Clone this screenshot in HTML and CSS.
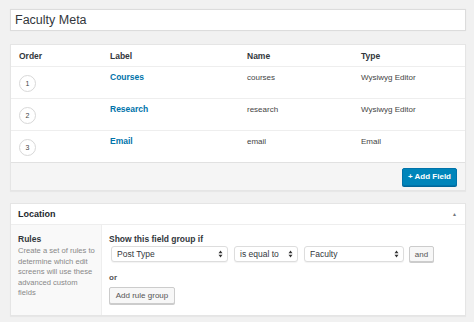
FILE: index.html
```html
<!DOCTYPE html>
<html>
<head>
<meta charset="utf-8">
<link rel="stylesheet" href="styles.css">
</head>
<body>
<div class="title">Faculty Meta</div>

<div class="panel fields">
  <div class="row head">
    <div>Order</div><div>Label</div><div>Name</div><div>Type</div>
  </div>
  <div class="row">
    <div><span class="num">1</span></div><div class="lbl">Courses</div><div class="sm">courses</div><div class="sm">Wysiwyg Editor</div>
  </div>
  <div class="row">
    <div><span class="num">2</span></div><div class="lbl">Research</div><div class="sm">research</div><div class="sm">Wysiwyg Editor</div>
  </div>
  <div class="row">
    <div><span class="num">3</span></div><div class="lbl">Email</div><div class="sm">email</div><div class="sm">Email</div>
  </div>
  <div class="foot"><span class="btn-primary">+ Add Field</span></div>
</div>

<div class="panel loc">
  <div class="loc-head"><span>Location</span><span class="caret">&#9650;</span></div>
  <div class="loc-body">
    <div class="side">
      <div class="side-title">Rules</div>
      <div class="side-desc">Create a set of rules to determine which edit screens will use these advanced custom fields</div>
    </div>
    <div class="main">
      <div class="main-title">Show this field group if</div>
      <div class="rule">
        <div class="sel w1"><span>Post Type</span><svg width="5" height="8" viewBox="0 0 5 8"><path d="M0.5 3.2 L2.5 0.6 L4.5 3.2Z M0.5 4.8 L2.5 7.4 L4.5 4.8Z" fill="#333"/></svg></div>
        <div class="sel w2"><span>is equal to</span><svg width="5" height="8" viewBox="0 0 5 8"><path d="M0.5 3.2 L2.5 0.6 L4.5 3.2Z M0.5 4.8 L2.5 7.4 L4.5 4.8Z" fill="#333"/></svg></div>
        <div class="sel w3"><span>Faculty</span><svg width="5" height="8" viewBox="0 0 5 8"><path d="M0.5 3.2 L2.5 0.6 L4.5 3.2Z M0.5 4.8 L2.5 7.4 L4.5 4.8Z" fill="#333"/></svg></div>
        <span class="btn and">and</span>
      </div>
      <div class="or">or</div>
      <span class="btn addgrp">Add rule group</span>
    </div>
  </div>
</div>
</body>
</html>
```
FILE: styles.css
```css
* { box-sizing: border-box; }
html, body { margin: 0; }
body {
  background: #f1f1f1;
  padding: 9px 8px 0 10px;
  font-family: "Liberation Sans", Arial, sans-serif;
  font-size: 8.5px;
  color: #23282d;
  width: 474px;
  height: 322px;
  overflow: hidden;
}
.title {
  height: 22px;
  background: #fff;
  border: 1px solid #dcdcdc;
  box-shadow: 0 0 1px rgba(0,0,0,0.06);
  font-size: 12.5px;
  line-height: 20px;
  padding-left: 4px;
  color: #32373c;
}
.panel {
  background: #fff;
  border: 1px solid #e5e5e5;
  box-shadow: 0 1px 1px rgba(0,0,0,0.04);
}
.fields { margin-top: 13px; }
.row {
  display: grid;
  grid-template-columns: 91px 137px 114px 1fr;
  padding-left: 8px;
  height: 32px;
  border-top: 1px solid #eeeeee;
  padding-top: 5px;
}
.row.head {
  border-top: 0;
  height: 21px;
  padding-top: 0;
  align-items: center;
  font-weight: bold;
  color: #32373c;
}
.num {
  display: inline-flex;
  width: 17px;
  height: 17px;
  margin-top: 3px;
  border: 1px solid #d8d8d8;
  border-radius: 50%;
  align-items: center;
  justify-content: center;
  font-size: 7px;
  color: #444;
  background: #fff;
}
.lbl {
  color: #0073aa;
  font-weight: bold;
  font-size: 8.5px;
}
.sm { font-size: 8px; color: #444; padding-top: 1px; }
.foot {
  border-top: 1px solid #e1e1e1;
  background: #f5f5f5;
  height: 28px;
  display: flex;
  justify-content: flex-end;
  align-items: center;
  padding-right: 8px;
}
.btn-primary {
  background: #0085ba;
  border: 1px solid #0073aa;
  box-shadow: 0 1px 0 #006799;
  color: #fff;
  border-radius: 2px;
  height: 18px;
  width: 55px;
  display: inline-flex;
  align-items: center;
  justify-content: center;
  font-size: 8px;
  font-weight: bold;
}
.loc { margin-top: 12px; }
.loc-head {
  height: 21px;
  display: flex;
  align-items: center;
  justify-content: space-between;
  padding: 0 8px 0 7px;
  border-bottom: 1px solid #eee;
  font-weight: bold;
  font-size: 9px;
  color: #23282d;
}
.caret { font-size: 5px; color: #72777c; }
.loc-body { display: flex; height: 90px; }
.side {
  width: 91px;
  background: #f9f9f9;
  border-right: 1px solid #eeeeee;
  padding: 9px 6px 0 7px;
}
.side-title { font-weight: bold; color: #32373c; line-height: 10px; }
.side-desc {
  color: #888;
  font-size: 7.6px;
  line-height: 10.5px;
  margin-top: 2px;
}
.main { padding: 9px 0 0 7px; flex: 1; }
.main-title { font-weight: bold; color: #32373c; line-height: 10px; }
.rule { display: flex; align-items: center; margin-top: 2px; margin-left: 2px; height: 16px; }
.sel {
  height: 16px;
  border: 1px solid #ddd;
  border-radius: 3px;
  background: #fff;
  box-shadow: 0 1px 1px rgba(0,0,0,0.05);
  display: flex;
  align-items: center;
  justify-content: space-between;
  padding: 0 4px 0 5px;
  color: #32373c;
  margin-right: 6px;
}
.w1 { width: 117px; }
.w2 { width: 64px; }
.w3 { width: 100px; margin-right: 5px; }
.btn {
  display: inline-flex;
  align-items: center;
  justify-content: center;
  background: #f7f7f7;
  border: 1px solid #cccccc;
  border-radius: 2px;
  box-shadow: 0 1px 0 #ccc;
  color: #555;
}
.and { width: 25px; height: 16px; font-size: 8px; }
.or { margin-top: 11px; font-weight: bold; color: #555; font-size: 8px; line-height: 10px; }
.addgrp { width: 66px; height: 17px; margin-top: 4px; font-size: 8px; }
```
